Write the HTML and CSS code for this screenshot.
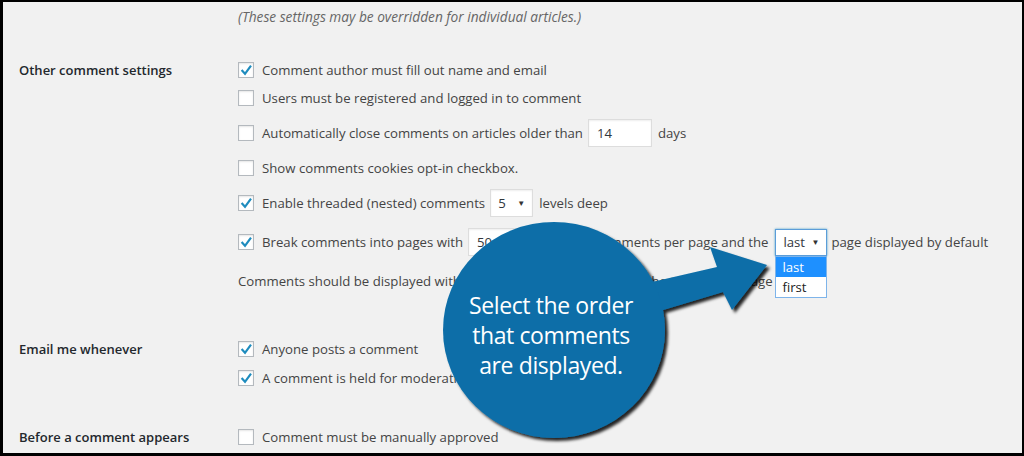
FILE: index.html
```html
<!DOCTYPE html>
<html lang="en">
<head>
<meta charset="utf-8">
<title>Discussion settings</title>
<link rel="stylesheet" href="styles.css">
</head>
<body>
<div class="frame">
  <p class="note">(These settings may be overridden for individual articles.)</p>

  <div class="section s-other">
    <div class="label">Other comment settings</div>
    <div class="rows">
      <div class="row tight">
        <span class="cb"><svg viewBox="0 0 16 16"><path d="M3.6 8.1 L7 11.8 L13 3.6"/></svg></span>
        <span>Comment author must fill out name and email</span>
      </div>
      <div class="row">
        <span class="cb"></span>
        <span>Users must be registered and logged in to comment</span>
      </div>
      <div class="row">
        <span class="cb"></span>
        <span>Automatically close comments on articles older than</span>
        <input class="field w-days" type="text" value="14">
        <span>days</span>
      </div>
      <div class="row">
        <span class="cb"></span>
        <span>Show comments cookies opt-in checkbox.</span>
      </div>
      <div class="row">
        <span class="cb"><svg viewBox="0 0 16 16"><path d="M3.6 8.1 L7 11.8 L13 3.6"/></svg></span>
        <span>Enable threaded (nested) comments</span>
        <span class="select sel-levels"><span>5</span><span class="caret">&#9660;</span></span>
        <span>levels deep</span>
      </div>
      <div class="row">
        <span class="cb"><svg viewBox="0 0 16 16"><path d="M3.6 8.1 L7 11.8 L13 3.6"/></svg></span>
        <span>Break comments into pages with</span>
        <input class="field w-pages" type="text" value="50">
        <span>comments per page and the</span>
        <span class="select sel-page"><span>last</span><span class="caret">&#9660;</span>
          <span class="dropdown">
            <span class="opt active">last</span>
            <span class="opt">first</span>
          </span>
        </span>
        <span class="after-page">page displayed by default</span>
      </div>
      <div class="row">
        <span>Comments should be displayed with the</span>
        <span class="select sel-order"><span>older</span><span class="caret">&#9660;</span></span>
        <span>comments at the top of each page</span>
      </div>
    </div>
  </div>

  <div class="section s-email">
    <div class="label">Email me whenever</div>
    <div class="rows">
      <div class="row">
        <span class="cb"><svg viewBox="0 0 16 16"><path d="M3.6 8.1 L7 11.8 L13 3.6"/></svg></span>
        <span>Anyone posts a comment</span>
      </div>
      <div class="row">
        <span class="cb"><svg viewBox="0 0 16 16"><path d="M3.6 8.1 L7 11.8 L13 3.6"/></svg></span>
        <span>A comment is held for moderation</span>
      </div>
    </div>
  </div>

  <div class="section s-before">
    <div class="label">Before a comment appears</div>
    <div class="rows">
      <div class="row">
        <span class="cb"></span>
        <span>Comment must be manually approved</span>
      </div>
    </div>
  </div>
</div>

<svg class="overlay" width="1024" height="456" viewBox="0 0 1024 456" aria-hidden="true">
  <defs>
    <filter id="sh" x="-10%" y="-10%" width="130%" height="130%">
      <feDropShadow dx="3" dy="3" stdDeviation="1.8" flood-color="#000" flood-opacity="0.85"/>
    </filter>
  </defs>
  <g filter="url(#sh)" fill="#0b6ea8">
    <polygon points="600,294 717,267 710,247 767,265 732,310 723,292 600,329"/>
    <ellipse cx="554" cy="330" rx="111" ry="108"/>
  </g>
</svg>
<div class="callout">Select the order<br>that comments<br>are displayed.</div>
</body>
</html>
```

FILE: styles.css
```css
body {
  margin: 0;
  position: relative;
  width: 1024px;
  height: 456px;
  overflow: hidden;
  font-family: "Open Sans", "Noto Sans", sans-serif;
  font-size: 13.2px;
  color: #444;
}

.frame {
  box-sizing: border-box;
  width: 1024px;
  height: 456px;
  border-style: solid;
  border-color: #000;
  border-width: 2px 2px 3px 3px;
  background: #f1f1f1;
  padding-left: 16px;
  overflow: hidden;
}

.note {
  margin: 0 0 0 219px;
  padding-top: 5px;
  line-height: 20px;
  font-size: 13.7px;
  font-style: italic;
  color: #666;
}

.section {
  display: grid;
  grid-template-columns: 219px 1fr;
}

.s-other { margin-top: 33px; }
.s-email { margin-top: 44px; }
.s-before { margin-top: 39px; }

.label {
  font-size: 13px;
  font-weight: 600;
  color: #23282d;
  line-height: 20px;
}

.rows {
  display: flex;
  flex-direction: column;
  gap: 11px;
}

.s-email .rows { gap: 9px; }

.row {
  display: flex;
  align-items: center;
  min-height: 20px;
  line-height: 20px;
  white-space: nowrap;
}

.row.tight { margin-bottom: -3px; }

.cb {
  box-sizing: border-box;
  position: relative;
  flex: none;
  width: 16px;
  height: 16px;
  margin-right: 8px;
  border: 1px solid #b4b9be;
  background: #fff;
  box-shadow: inset 0 1px 2px rgba(0, 0, 0, 0.1);
}

.cb svg {
  position: absolute;
  left: -1px;
  top: -1px;
  width: 16px;
  height: 16px;
}

.cb path {
  fill: none;
  stroke: #1e8cbe;
  stroke-width: 2.2;
}

.field {
  box-sizing: border-box;
  height: 28px;
  margin: 0 6px 0 5px;
  padding: 0 8px;
  border: 1px solid #ddd;
  background: #fff;
  box-shadow: inset 0 1px 2px rgba(0, 0, 0, 0.07);
  font: inherit;
  color: #32373c;
  outline: none;
}

.w-days { width: 64px; }
.w-pages { width: 121px; }

.select {
  box-sizing: border-box;
  position: relative;
  display: flex;
  align-items: center;
  justify-content: space-between;
  height: 28px;
  margin: 0 6px 0 5px;
  padding: 0 7px 0 7px;
  border: 1px solid #ddd;
  background: #fff;
  box-shadow: inset 0 1px 2px rgba(0, 0, 0, 0.07);
  color: #32373c;
}

.caret {
  font-size: 8px;
  line-height: 8px;
  color: #333;
}

.sel-levels { width: 43px; }

.sel-page {
  width: 52px;
  height: 27px;
  margin-left: 7px;
  margin-right: 4px;
  border-color: #5b9dd9;
  box-shadow: 0 0 2px rgba(30, 140, 190, 0.8);
}

.sel-order { width: 67px; }

.dropdown {
  box-sizing: border-box;
  position: absolute;
  left: -1px;
  top: calc(100% + 1px);
  width: 52px;
  display: flex;
  flex-direction: column;
  border: 1px solid #7eb4ea;
  background: #fff;
}

.opt {
  line-height: 20px;
  padding-left: 6px;
  color: #222;
}

.opt.active {
  background: #1e90ff;
  color: #fff;
}

.overlay {
  position: absolute;
  left: 0;
  top: 0;
  pointer-events: none;
}

.callout {
  position: absolute;
  left: 443px;
  top: 290px;
  width: 216px;
  text-align: center;
  color: #fff;
  font-size: 23px;
  letter-spacing: -0.4px;
  line-height: 30px;
}
```
